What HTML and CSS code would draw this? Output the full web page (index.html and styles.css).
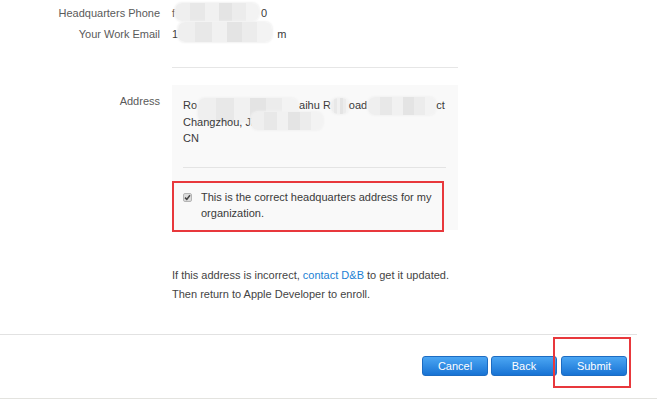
FILE: index.html
```html
<!DOCTYPE html>
<html>
<head>
<meta name="viewport" content="width=device-width, initial-scale=1">
<title>Enroll - Confirm Address</title>
<link rel="stylesheet" href="styles.css">
</head>
  <body>
    <div class="page">
      <div class="rows">
        <div class="row">
          <div class="label">Headquarters Phone</div>
          <div class="value">f<span class="blur blur-phone"></span>0</div>
        </div>
        <div class="row">
          <div class="label">Your Work Email</div>
          <div class="value">1<span class="blur blur-email"></span>m</div>
        </div>
      </div>

      <div class="rule"></div>

      <div class="row address-row">
        <div class="label">Address</div>
        <div class="address-box">
          <div class="address-lines">
            <div>Ro<span class="blur blur-a"></span>aihu R<span class="blur blur-b"></span>oad<span class="blur blur-c"></span>ct</div>
            <div>Changzhou, Ji<span class="blur blur-d"></span></div>
            <div>CN</div>
          </div>
          <div class="inner-rule"></div>
          <label class="confirm">
            <span class="check">
              <svg width="9" height="9" viewBox="0 0 9 9">
                <rect x="0.5" y="0.5" width="8" height="8" rx="1.5" fill="#dcdcdc" stroke="#b5b5b5"/>
                <path d="M2 4.6 L3.8 6.4 L7 2.2" fill="none" stroke="#444" stroke-width="1.5"/>
              </svg>
            </span>
            <span>This is the correct headquarters address for my organization.</span>
          </label>
        </div>
      </div>

      <p class="note">If this address is incorrect, <a href="#">contact D&amp;B</a> to get it updated.<br>Then return to Apple Developer to enroll.</p>
    </div>

    <div class="footer">
      <div class="actions">
        <button type="button">Cancel</button>
        <button type="button">Back</button>
        <span class="submit-wrap"><button type="submit">Submit</button></span>
      </div>
    </div>
    <div class="bottom-band"></div>
  </body>
</html>
```

FILE: styles.css
```css
body {
  margin: 0;
  font-family: "Liberation Sans", Helvetica, Arial, sans-serif;
  font-size: 11px;
  color: #3a3a3a;
  background: #fff;
}

.page {
  padding-top: 3px;
}

.row {
  display: grid;
  grid-template-columns: 160px 286px;
  column-gap: 12px;
  line-height: 21px;
}

.label {
  text-align: right;
  color: #5a5a5a;
}

.value {
  white-space: nowrap;
}

 .blur {
        display: inline-block;
        vertical-align: middle;
        border-radius: 7px;
        background: linear-gradient(90deg, #efefef 0 18%, #e8e8e8 18% 36%, #f1f1f1 36% 52%, #e4e4e4 52% 68%, #ececec 68% 84%, #f3f3f3 84%);
        box-shadow: 0 0 2px 1px #f2f2f2;
    }

 .blur-phone { width: 84px; height: 18px; margin: -5px 2px 0 0; }
 .blur-email { width: 94px; height: 20px; margin: -6px 5px 0 0; }
 .blur-a { width: 100px; height: 24px; margin: -4px 1px -12px 1px; }
 .blur-b { width: 18px; height: 16px; margin: -4px 0; }
 .blur-c { width: 68px; height: 18px; margin: -4px 0 -4px 1px; }
 .blur-d { width: 72px; height: 18px; margin: -6px 0 -2px -2px; }

.rule {
  margin: 22px 0 0 172px;
  width: 286px;
  border-top: 1px solid #e6e6e6;
}

.address-row {
  margin-top: 17px;
}

.address-row .label {
  padding-top: 8px;
  line-height: 16px;
}

.address-box {
  background-color: #f9f9f9;
  padding-top: 12px;
  margin-bottom: 2px;
}

.address-lines {
  padding-left: 11px;
  line-height: 16.5px;
  white-space: nowrap;
}

.inner-rule {
  margin: 20px 12px 0 11px;
  border-top: 1px solid #e4e4e4;
}

 .confirm {
        display: flex;
        gap: 9px;
        margin: 13px 14px -2px 0;
        padding: 6px 10px 9px 9px;
        border: 2px solid #e8383c;
        line-height: 16px;
    }

 .check {
        padding-top: 4px;
        line-height: 0;
    }

.note {
  margin: 34px 0 0 172px;
  line-height: 19px;
  color: #444;
}

.note a {
  color: #1a7fd4;
  text-decoration: none;
}

.footer {
  margin-top: 30px;
  width: 637px;
  border-top: 1px solid #e2e2e2;
}

.actions {
  display: flex;
  justify-content: flex-end;
  gap: 3px;
  padding: 21px 10px 0 0;
}

button {
  width: 66px;
  height: 20px;
  padding: 0;
  font-family: inherit;
  font-size: 11px;
  color: #fff;
  background: linear-gradient(#4ba6f3, #1873d4);
  border: 1px solid #1d6cc2;
  border-radius: 3px;
  cursor: pointer;
}

.submit-wrap {
  position: relative;
  display: flex;
  margin-left: 1px;
}

.submit-wrap::after {
  content: "";
  position: absolute;
  left: -8px;
  right: -4px;
  top: -19px;
  bottom: -12px;
  border: 2px solid #e8383c;
  pointer-events: none;
}

.bottom-band {
  margin-top: 22px;
  height: 2px;
  background-color: #e3e3df;
}
```
